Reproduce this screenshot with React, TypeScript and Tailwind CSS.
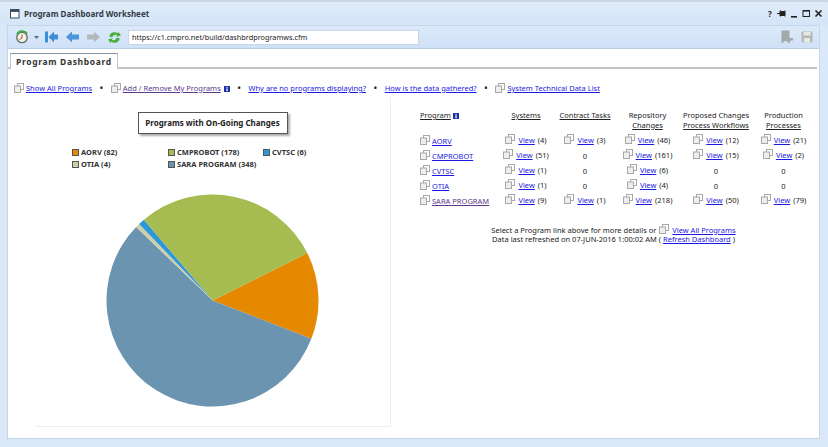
import React from "react";

const Cp = ({ className = "" }: { className?: string }) => (
  <svg width="10" height="10" viewBox="0 0 10 10" className={`inline-block shrink-0 ${className}`}>
    <rect x="3.5" y="0.5" width="6" height="6" fill="#fff" stroke="#a8a8a8" />
    <rect x="0.5" y="3" width="6" height="6.5" fill="#eee" stroke="#a8a8a8" />
  </svg>
);

const Info = () => (
  <svg width="6" height="6" viewBox="0 0 6 6" className="inline-block">
    <rect width="6" height="6" fill="#1a2fa8" />
    <rect x="2.4" y="0.8" width="1.3" height="1" fill="#fff" />
    <rect x="2.4" y="2.4" width="1.3" height="2.8" fill="#fff" />
  </svg>
);

const A = ({ children, visited }: { children: React.ReactNode; visited?: boolean }) => (
  <span className={`underline ${visited ? "text-[#5b3a8c]" : "text-[#1a1ae0]"}`}>{children}</span>
);

const View = ({ n }: { n: number }) => (
  <span className="inline-flex items-center justify-center whitespace-nowrap">
    <Cp className="mr-[3px] -mt-[3px]" />
    <A>View</A>
    <span className="ml-[3px]">({n})</span>
  </span>
);

const rows: { name: string; visited?: boolean; v: (number | null)[] }[] = [
  { name: "AORV", v: [4, 3, 46, 12, 21] },
  { name: "CMPROBOT", v: [51, null, 161, 15, 2] },
  { name: "CVTSC", v: [1, null, 6, null, null] },
  { name: "OTIA", v: [1, null, 4, null, null] },
  { name: "SARA PROGRAM", visited: true, v: [9, 1, 218, 50, 79] },
];

const pt = (deg: number, r = 106) => {
  const a = (deg * Math.PI) / 180;
  return `${(106.5 + r * Math.sin(a)).toFixed(2)} ${(106.5 - r * Math.cos(a)).toFixed(2)}`;
};
const wedge = (from: number, to: number) =>
  `M106.5 106.5 L${pt(from)} A106 106 0 ${to - from > 180 ? 1 : 0} 1 ${pt(to)} Z`;

const legend = [
  ["AORV (82)", "bg-[#e58a00]"],
  ["CMPROBOT (178)", "bg-[#a6bb50]"],
  ["CVTSC (6)", "bg-[#2e97d8]"],
  ["OTIA (4)", "bg-[#cfcfa8]"],
  ["SARA PROGRAM (348)", "bg-[#6b94b0]"],
];

const Dot = () => <span className="mx-[7.5px] text-[10px]">•</span>;

export default function App() {
  return (
    <div
      className="w-[828px] h-[447px] overflow-hidden flex flex-col bg-[#dbe8f8] text-[#222] text-[7.5px] leading-[10px] border-t-2 border-[#c9d6e4]"
      style={{ fontFamily: '"Noto Sans", sans-serif' }}
    >
      {/* window title */}
      <div className="h-[23px] flex items-center pl-[10px] pr-[5px] bg-gradient-to-b from-[#dfebf9] to-[#d5e5f8] shrink-0">
        <svg width="10" height="10" viewBox="0 0 10 10">
          <rect x="0.5" y="0.5" width="8.5" height="8.5" fill="#fff" stroke="#3c4a5c" />
          <rect x="0.5" y="0.5" width="8.5" height="2.4" fill="#3c4a5c" />
        </svg>
        <span className="ml-[4px] font-bold text-[8px] text-[#333a46]">Program Dashboard Worksheet</span>
        <div className="ml-auto flex items-center gap-[3px] text-[#222]">
          <span className="font-bold text-[8px] w-[8px] text-center">?</span>
          <svg width="9" height="9" viewBox="0 0 9 9">
            <path d="M0 4.5h3M3 2h1v5H3zM4 2.5h3.5v4H4zM8 1.5v6" stroke="#222" strokeWidth="1" fill="#222" />
          </svg>
          <svg width="9" height="9" viewBox="0 0 9 9" className="ml-[1px]">
            <rect x="1" y="7" width="6" height="1.6" fill="#222" />
          </svg>
          <svg width="9" height="9" viewBox="0 0 9 9">
            <rect x="1" y="1.5" width="6.5" height="6" fill="none" stroke="#222" />
            <rect x="1" y="1" width="6.5" height="1.6" fill="#222" />
          </svg>
          <svg width="9" height="9" viewBox="0 0 9 9">
            <path d="M1.5 1.5l6 6M7.5 1.5l-6 6" stroke="#222" strokeWidth="1.6" />
          </svg>
        </div>
      </div>

      {/* inner panel */}
      <div className="flex-1 min-h-0 ml-[7px] mr-[8px] mb-[8px] flex flex-col border border-[#c5d6ea] bg-white">
        {/* toolbar */}
        <div className="h-[23px] shrink-0 flex items-center pl-[7px] pr-[6px] bg-gradient-to-b from-[#dce9fa] to-[#cfe1f7] border-b border-[#b8cde6]">
          <svg width="14" height="14" viewBox="0 0 14 14">
            <circle cx="7" cy="7.5" r="5.2" fill="#f3f3ea" stroke="#5d6b5d" strokeWidth="1.3" />
            <path d="M2 4.5A6 6 0 0 1 12 3.5" stroke="#46a84a" strokeWidth="2" fill="none" />
            <path d="M7 4.5V8L4.5 9.5" stroke="#b04a2a" strokeWidth="1" fill="none" />
          </svg>
          <svg width="5" height="3" viewBox="0 0 5 3" className="ml-[5px]">
            <path d="M0 0h5L2.5 3z" fill="#5b6f8a" />
          </svg>
          <svg width="13" height="12" viewBox="0 0 13 12" className="ml-[6px]">
            <rect x="0" y="0.5" width="3" height="11" fill="#3b8fd6" />
            <path d="M3.5 6L9 0.5V3.5H13V8.5H9V11.5z" fill="#3b8fd6" />
          </svg>
          <svg width="13" height="12" viewBox="0 0 13 12" className="ml-[8px]">
            <path d="M0 6L6 0.5V3.5H13V8.5H6V11.5z" fill="#4a94dc" />
          </svg>
          <svg width="13" height="12" viewBox="0 0 13 12" className="ml-[8px]">
            <path d="M13 6L7 0.5V3.5H0V8.5H7V11.5z" fill="#b4b8bc" />
          </svg>
          <svg width="13" height="13" viewBox="0 0 13 13" className="ml-[8px]">
            <path d="M1.5 6A5 4.5 0 0 1 10 2.5V0.5L13 4.5L8 6L9.3 4.4A3 3 0 0 0 4.5 6z" fill="#4cae3c" />
            <path d="M11.5 7A5 4.5 0 0 1 3 10.5V12.5L0 8.5L5 7L3.7 8.6A3 3 0 0 0 8.5 7z" fill="#4cae3c" />
          </svg>
          <div className="ml-[7px] w-[291px] h-[15px] bg-white border border-[#c9d6e4] flex items-center pl-[3px] text-[#222] text-[7.3px]">
            https://c1.cmpro.net/build/dashbrdprogramws.cfm
          </div>
          <svg width="12" height="14" viewBox="0 0 12 14" className="ml-auto">
            <path d="M0.5 0.5H8.5V8H12V10.5H9V13.5L4.5 10.5L0.5 13.5z" fill="#a3a8a8" />
          </svg>
          <svg width="12" height="12" viewBox="0 0 12 12" className="ml-[8px]">
            <rect x="0.5" y="0.5" width="11" height="11" rx="1" fill="#b4b8b8" />
            <rect x="2.5" y="1" width="7" height="3.5" fill="#e6e8e8" />
            <rect x="3" y="7" width="6" height="4.5" fill="#e6e8e8" />
          </svg>
        </div>

        {/* content */}
        <div className="flex-1 min-h-0 flex flex-col">
          {/* tabs */}
          <div className="h-[18px] shrink-0 mr-[2px] mt-[2px] pl-[2px] border-b-2 border-[#c4c4c4] flex items-end">
            <div className="h-[16px] -mb-[2px] px-[5px] flex items-center bg-white border border-b-0 border-[#bcc4cc] border-t-[#8a96a4] font-bold text-[8.5px] tracking-[0.65px] text-[#333]">
              Program Dashboard
            </div>
          </div>

          {/* links */}
          <div className="h-[20px] mt-[9px] shrink-0 flex items-center pl-[6px] whitespace-nowrap">
            <Cp />
            <span className="ml-[2px]"><A>Show All Programs</A></span>
            <Dot />
            <Cp />
            <span className="ml-[2px]"><A visited>Add / Remove My Programs</A></span>
            <span className="ml-[3px]"><Info /></span>
            <Dot />
            <A>Why are no programs displaying?</A>
            <Dot />
            <A>How is the data gathered?</A>
            <Dot />
            <Cp />
            <span className="ml-[2px]"><A>System Technical Data List</A></span>
          </div>

          {/* body */}
          <div className="flex-1 min-h-0 flex pl-[27px]">
            {/* chart */}
            <div className="w-[356px] h-[330px] mt-[-1px] shrink-0 border-r border-b border-[#e6f4e6] flex flex-col items-center relative">
              <div className="mt-[15px] w-[150px] h-[22px] border border-[#555] bg-white shadow-[2px_2px_2px_#aaa] flex items-center justify-center font-bold text-[8px] text-[#222] whitespace-nowrap">
                Programs with On-Going Changes
              </div>
              <div className="mt-[13px] self-start ml-[37px] grid grid-cols-[96px_95px_auto] gap-y-[2px] font-bold text-[7.5px] text-[#333]">
                {legend.map(([t, c]) => (
                  <div key={t} className="flex items-center h-[10px] whitespace-nowrap">
                    <span className={`w-[7px] h-[7px] shrink-0 border border-[#555] mr-[2px] ${c}`} />
                    {t}
                  </div>
                ))}
              </div>
              <svg width="213" height="213" viewBox="0 0 213 213" className="mt-[25px]">
                <path d={wedge(63.4, 111.2)} fill="#e58a00" />
                <path d={wedge(111.2, 313.9)} fill="#6b94b0" />
                <path d={wedge(313.9, 316.2)} fill="#cfcfa8" />
                <path d={wedge(316.2, 319.7)} fill="#2e97d8" />
                <path d={wedge(319.7, 423.4)} fill="#a6bb50" />
              </svg>
            </div>

            {/* table */}
            <div className="ml-[29px] flex-1 min-w-0">
              <table className="table-fixed border-collapse w-[395px] mt-[12px] text-center text-[#222]">
                <colgroup>
                  <col className="w-[77px]" />
                  <col className="w-[58px]" />
                  <col className="w-[60px]" />
                  <col className="w-[65px]" />
                  <col className="w-[72px]" />
                  <col className="w-[63px]" />
                </colgroup>
                <thead>
                  <tr className="h-[23px] align-top">
                    <th className="font-normal text-left"><span className="underline">Program</span> <Info /></th>
                    <th className="font-normal"><span className="underline">Systems</span></th>
                    <th className="font-normal whitespace-nowrap"><span className="underline">Contract Tasks</span></th>
                    <th className="font-normal">Repository<br /><span className="underline">Changes</span></th>
                    <th className="font-normal whitespace-nowrap">Proposed Changes<br /><span className="underline">Process Workflows</span></th>
                    <th className="font-normal">Production<br /><span className="underline">Processes</span></th>
                  </tr>
                </thead>
                <tbody>
                  {rows.map((r) => (
                    <tr key={r.name} className="h-[15px]">
                      <td className="text-left whitespace-nowrap">
                        <Cp className="mr-[2px] -mt-[3px] align-middle" />
                        <A visited={r.visited}>{r.name}</A>
                      </td>
                      {r.v.map((n, i) => (
                        <td key={i}>{n === null ? "0" : <View n={n} />}</td>
                      ))}
                    </tr>
                  ))}
                </tbody>
              </table>
              <div className="mt-[18px] w-[387px] text-center leading-[9px]">
                <div>
                  Select a Program link above for more details or <Cp className="mx-[1px] -mt-[3px] align-middle" /> <A>View All Programs</A>
                </div>
                <div>
                  Data last refreshed on 07-JUN-2016 1:00:02 AM ( <A>Refresh Dashboard</A> )
                </div>
              </div>
            </div>
          </div>
        </div>
      </div>
    </div>
  );
}
